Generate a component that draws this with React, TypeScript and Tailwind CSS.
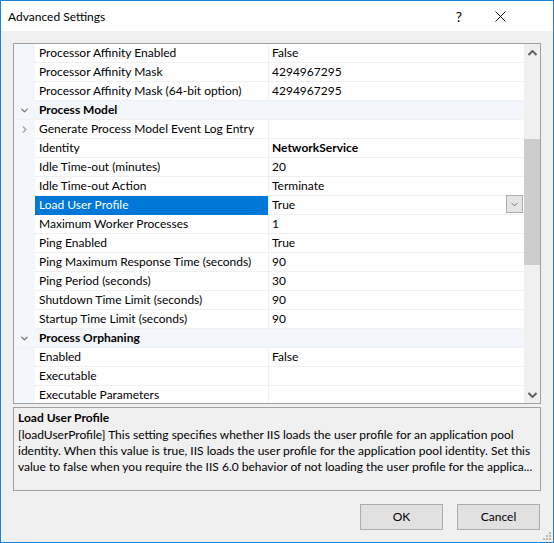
import { ChevronDown, ChevronRight } from 'lucide-react';

type Row =
    | { kind: 'cat'; name: string }
    | { kind: 'prop'; name: string; value?: string; bold?: boolean; expandable?: boolean; selected?: boolean };

const rows: Row[] = [
    { kind: 'prop', name: 'Processor Affinity Enabled', value: 'False' },
    { kind: 'prop', name: 'Processor Affinity Mask', value: '4294967295' },
    { kind: 'prop', name: 'Processor Affinity Mask (64-bit option)', value: '4294967295' },
    { kind: 'cat', name: 'Process Model' },
    { kind: 'prop', name: 'Generate Process Model Event Log Entry', expandable: true },
    { kind: 'prop', name: 'Identity', value: 'NetworkService', bold: true },
    { kind: 'prop', name: 'Idle Time-out (minutes)', value: '20' },
    { kind: 'prop', name: 'Idle Time-out Action', value: 'Terminate' },
    { kind: 'prop', name: 'Load User Profile', value: 'True', selected: true },
    { kind: 'prop', name: 'Maximum Worker Processes', value: '1' },
    { kind: 'prop', name: 'Ping Enabled', value: 'True' },
    { kind: 'prop', name: 'Ping Maximum Response Time (seconds)', value: '90' },
    { kind: 'prop', name: 'Ping Period (seconds)', value: '30' },
    { kind: 'prop', name: 'Shutdown Time Limit (seconds)', value: '90' },
    { kind: 'prop', name: 'Startup Time Limit (seconds)', value: '90' },
    { kind: 'cat', name: 'Process Orphaning' },
    { kind: 'prop', name: 'Enabled', value: 'False' },
    { kind: 'prop', name: 'Executable' },
    { kind: 'prop', name: 'Executable Parameters' },
];

const GridRow = ({ row }: { row: Row }) => {
    if (row.kind === 'cat') {
        return (
            <div className="flex h-[19px] shrink-0 bg-[#f3f6fa] border-b border-[#f0f0f0]">
                <div className="w-[21px] shrink-0 flex items-center justify-center text-[#6d6d6d]">
                    <ChevronDown size={11} strokeWidth={2.5} />
                </div>
                <div className="pl-[4px] font-bold leading-[18px] whitespace-nowrap">{row.name}</div>
            </div>
        );
    }
    return (
        <div className="flex h-[19px] shrink-0">
            <div className="w-[21px] shrink-0 bg-[#f3f6fa] flex items-center justify-center text-[#a0a0a0]">
                {row.expandable && <ChevronRight size={11} strokeWidth={2.5} />}
            </div>
            <div
                className={
                    row.selected
                        ? 'w-[233px] shrink-0 pl-[4px] leading-[18px] whitespace-nowrap overflow-hidden bg-[#0078d7] text-white border-b border-[#0078d7]'
                        : 'w-[233px] shrink-0 pl-[4px] leading-[18px] whitespace-nowrap overflow-hidden border-b border-[#f0f0f0]'
                }
            >
                {row.name}
            </div>
            <div className="w-px shrink-0 bg-[#f0f0f0]" />
            <div className="flex-1 flex items-start pl-[3px] border-b border-[#f0f0f0]">
                <span className={row.bold ? 'font-bold leading-[18px]' : 'leading-[18px]'}>{row.value}</span>
                {row.selected && (
                    <div className="ml-auto mr-[1px] mt-[-1px] w-[17px] h-[18px] border border-[#adadad] bg-[#e5e5e5] flex items-center justify-center text-[#444]">
                        <ChevronDown size={11} strokeWidth={1.5} />
                    </div>
                )}
            </div>
        </div>
    );
};

const App = () => {
    return (
        <div
            className="relative w-[554px] h-[543px] border border-[#1883d7] bg-[#f0f0f0] flex flex-col text-[12px] text-black"
            style={{ fontFamily: '"Segoe UI", Lato, "Noto Sans", sans-serif' }}
        >
            {/* Title bar */}
            <div className="h-[30px] shrink-0 bg-white flex items-center">
                <span className="pl-[7px] pt-[1px]">Advanced Settings</span>
                <span className="ml-auto w-[16px] text-center text-[14px] mr-[28px]">?</span>
                <svg width="11" height="11" viewBox="0 0 11 11" className="mr-[47px]">
                    <path d="M0.5 0.5 L10.5 10.5 M10.5 0.5 L0.5 10.5" stroke="#111" strokeWidth="1" />
                </svg>
            </div>

            <div className="flex-1 flex flex-col px-[12px] pt-[12px]">
                {/* Property grid */}
                <div className="h-[361px] shrink-0 border border-[#a0a0a0] bg-white flex overflow-hidden">
                    <div className="flex-1 flex flex-col overflow-hidden">
                        {rows.map((r, i) => (
                            <GridRow key={i} row={r} />
                        ))}
                    </div>
                    <div className="w-[16px] shrink-0 bg-[#f0f0f0] flex flex-col">
                        <div className="h-[17px] flex items-center justify-center text-[#606060]">
                            <svg width="9" height="6" viewBox="0 0 9 6">
                                <path d="M0.5 5 L4.5 1 L8.5 5" stroke="#606060" strokeWidth="2" fill="none" />
                            </svg>
                        </div>
                        <div className="h-[78px]" />
                        <div className="h-[126px] bg-[#cdcdcd]" />
                        <div className="flex-1" />
                        <div className="h-[17px] flex items-center justify-center">
                            <svg width="9" height="6" viewBox="0 0 9 6">
                                <path d="M0.5 1 L4.5 5 L8.5 1" stroke="#606060" strokeWidth="2" fill="none" />
                            </svg>
                        </div>
                    </div>
                </div>

                {/* Description panel */}
                <div className="mt-[3px] h-[84px] shrink-0 border border-[#a0a0a0] bg-[#f0f0f0] px-[4px] pt-[1px] whitespace-nowrap overflow-hidden">
                    <div className="font-bold leading-[18px]">Load User Profile</div>
                    <div className="leading-[16px]">
                        [loadUserProfile] This setting specifies whether IIS loads the user profile for an application pool
                        <br />
                        identity. When this value is true, IIS loads the user profile for the application pool identity. Set this
                        <br />
                        value to false when you require the IIS 6.0 behavior of not loading the user profile for the applica...
                    </div>
                </div>

                {/* Buttons */}
                <div className="flex justify-end gap-[14px] mt-[13px] pr-[1px]">
                    <button className="w-[83px] h-[26px] border border-[#adadad] bg-[#e1e1e1]">OK</button>
                    <button className="w-[83px] h-[26px] border border-[#adadad] bg-[#e1e1e1]">Cancel</button>
                </div>
            </div>

            {/* Resize grip */}
            <svg width="9" height="9" viewBox="0 0 9 9" className="absolute right-[1px] bottom-[1px]">
                <rect x="6" y="0" width="2" height="2" fill="#b8b8b8" />
                <rect x="3" y="3" width="2" height="2" fill="#b8b8b8" />
                <rect x="6" y="3" width="2" height="2" fill="#b8b8b8" />
                <rect x="0" y="6" width="2" height="2" fill="#b8b8b8" />
                <rect x="3" y="6" width="2" height="2" fill="#b8b8b8" />
                <rect x="6" y="6" width="2" height="2" fill="#b8b8b8" />
            </svg>
        </div>
    );
};

export default App;
